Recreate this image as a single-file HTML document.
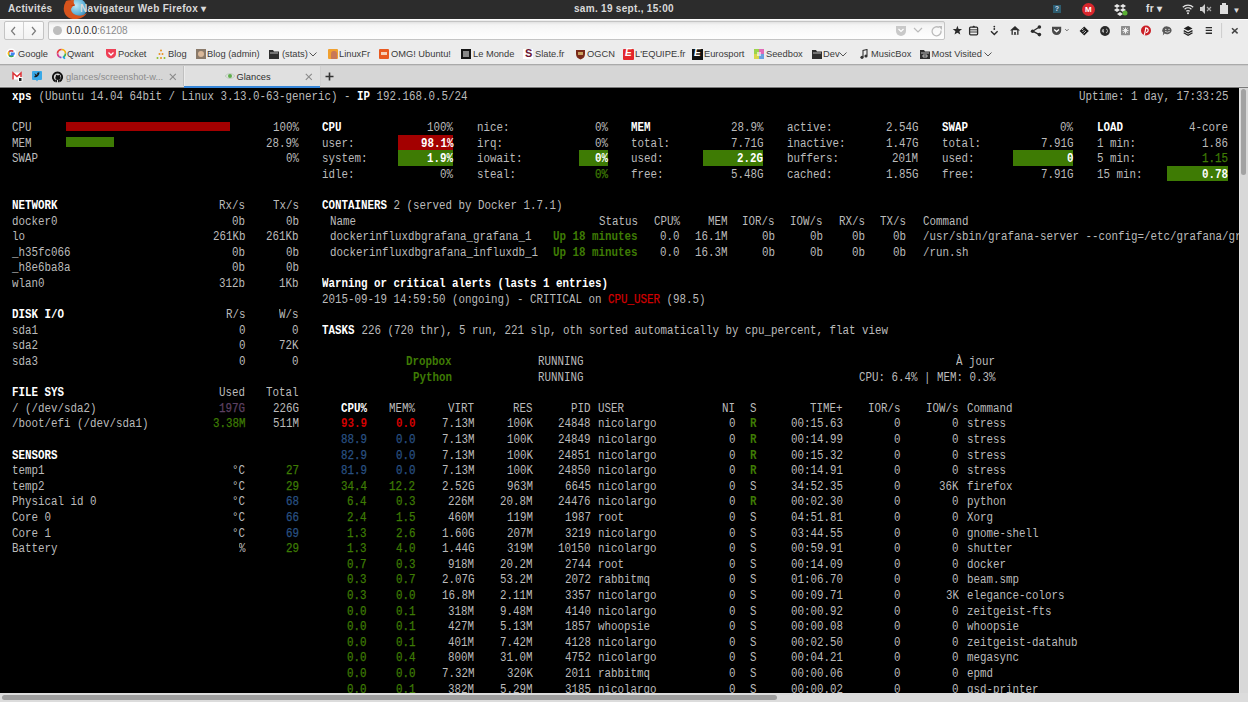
<!DOCTYPE html>
<html><head><meta charset="utf-8"><style>
html,body{margin:0;padding:0;}
body{width:1248px;height:702px;overflow:hidden;position:relative;background:#000;font-family:"Liberation Sans",sans-serif;}
#term{position:absolute;left:0;top:88px;width:1240px;height:605px;background:#000;overflow:hidden;}
#term .inner{position:absolute;left:0;top:-88px;width:1240px;height:702px;}
.t{position:absolute;white-space:pre;font-family:"Liberation Mono",monospace;font-size:12.0px;line-height:15.6px;height:15.6px;color:#bbbbbb;transform:scaleX(0.90263);transform-origin:0 0;}
.t.b{font-weight:bold;color:#fff;}
.t.w{color:#fff;}
.t.c{font-weight:bold;}
.t.col{-webkit-text-stroke:0.25px currentColor;}
.bg{position:absolute;}
#topbar{position:absolute;left:0;top:0;width:1248px;height:19px;background:#2c2c2c;color:#dadada;font-weight:bold;font-size:10px;letter-spacing:0.3px;overflow:hidden;}
#topbar span{position:absolute;top:3px;white-space:pre;}
#toolbox{position:absolute;left:0;top:19px;width:1248px;height:46px;background:#ececec;border-top:1px solid #ffffff;border-bottom:1px solid #aaaaaa;box-sizing:border-box;}
#navbar{position:absolute;left:0;top:19px;width:1248px;height:24px;}
#bkbar{position:absolute;left:0;top:43px;width:1248px;height:21px;}
#bkbar span{position:absolute;top:6px;font-size:9.3px;color:#3a3a3a;white-space:pre;}
#tabbar{position:absolute;left:0;top:65px;width:1248px;height:23px;background:#d6d6d6;border-top:1px solid #c8c8c8;border-bottom:1px solid #7a7a7a;box-sizing:border-box;}
.ico{position:absolute;}
#vscroll{position:absolute;left:1239px;top:88px;width:9px;height:605px;background:#d8d8d8;border-left:1px solid #e4e4e4;box-sizing:border-box;}
#vscroll .thumb{position:absolute;left:1px;top:1px;width:5px;height:86px;background:#a2a2a2;border-radius:2.5px;}
#hscroll{position:absolute;left:0;top:693px;width:1240px;height:9px;background:#dcdcdc;}
#hscroll .thumb{position:absolute;left:2px;top:2px;width:775px;height:5px;background:#9e9e9e;border-radius:3px;}
#corner{position:absolute;left:1240px;top:693px;width:8px;height:9px;background:#dcdcdc;}

</style></head><body>

<div id="topbar">
<span style="left:8px">Activités</span>
<svg class="ico" style="left:62px;top:0" width="28" height="19"><defs><radialGradient id="gl" cx="0.45" cy="0.35" r="0.7"><stop offset="0" stop-color="#bfe6f5"/><stop offset="0.6" stop-color="#5fb3da"/><stop offset="1" stop-color="#2f6f9a"/></radialGradient></defs><circle cx="15" cy="8.5" r="10" fill="url(#gl)"/><path d="M4 1 Q0 8 3 14 Q7 20 15 19 Q22 18 25 13 Q20 17 14 15 Q9 13 9 9 Q10 6 13 5 Q11 3 12 0 Q6 0 4 1z" fill="#d6531c"/><path d="M9 6 q1-2 4-1 l-1 1z" fill="#c23a10"/></svg>
<span style="left:80px">Navigateur Web Firefox ▾</span>
<span style="left:574px">sam. 19 sept., 15:00</span>
<div class="ico" style="left:1053px;top:5px;width:8px;height:8px;background:#2e5c6e;color:#cde;font-size:7px;line-height:8px;text-align:center">?</div>
<div class="ico" style="left:1082px;top:3px;width:13px;height:13px;border-radius:50%;background:#d9272e;color:#fff;font-size:8px;line-height:13px;text-align:center">M</div>
<svg class="ico" style="left:1114px;top:3px" width="14" height="13"><path d="M3 1 l3 2 -3 2 -3 -2z M9 1 l3 2 -3 2 -3 -2z M3 5 l3 2 -3 2 -3 -2z M9 5 l3 2 -3 2 -3 -2z M6 9 l3 2 -3 2 -3 -2z" fill="#e8e8e8"/><circle cx="11" cy="10" r="2.5" fill="#5bb135"/></svg>
<span style="left:1146px;top:3px;color:#e0e0e0">fr ▾</span>
<svg class="ico" style="left:1182px;top:3px" width="12" height="12"><g fill="none" stroke="#e5e5e5" stroke-width="1.2"><path d="M.8 4.2A7.5 7.5 0 0 1 11.2 4.2"/><path d="M2.6 6.3A5 5 0 0 1 9.4 6.3"/><path d="M4.3 8.3A2.5 2.5 0 0 1 7.7 8.3"/></g><circle cx="6" cy="10.3" r="1" fill="#e5e5e5"/></svg>
<svg class="ico" style="left:1200px;top:4px" width="12" height="10"><path d="M0 3h2l3-3v10l-3-3h-2z" fill="#cfcfcf"/><path d="M7 3l4 4M11 3l-4 4" stroke="#aaa" stroke-width="1.2"/></svg>
<div class="ico" style="left:1220px;top:5px;width:8px;height:9px;background:#dedede"></div><div class="ico" style="left:1222px;top:3px;width:4px;height:2px;background:#dedede"></div>
<span style="left:1232.5px;top:5.5px;font-size:8px">▼</span>
</div>
<div id="toolbox"></div>
<div id="navbar">
<div style="position:absolute;left:4px;top:2px;width:40px;height:19px;border:1px solid #c4c4c4;border-radius:2px;background:linear-gradient(#fbfbfb,#f2f2f2);box-sizing:border-box"></div>
<div style="position:absolute;left:23px;top:3px;width:1px;height:17px;background:#d0d0d0"></div>
<svg class="ico" style="left:10px;top:7px" width="30" height="10"><path d="M5 1 L1.5 5 L5 9" stroke="#7a7a7a" stroke-width="1.2" fill="none"/><path d="M22 1 L25.5 5 L22 9" stroke="#7a7a7a" stroke-width="1.2" fill="none"/></svg>
<div style="position:absolute;left:48px;top:2px;width:897px;height:19px;border:1px solid #c4c4c4;border-radius:2px;background:linear-gradient(#e2e2e2,#f4f4f4 3px,#f9f9f9 50%,#fefefe);box-sizing:border-box"></div>
<div class="ico" style="left:53px;top:7px;width:9px;height:9px;border-radius:50%;background:#bdbdbd"></div>
<span style="position:absolute;left:66.5px;top:5.5px;font-size:10px;color:#2a2a2a;white-space:pre">0.0.0.0<span style="color:#8a8a8a">:61208</span></span>
<svg class="ico" style="left:895px;top:6px" width="50" height="12"><path d="M1 1h10v5a5 5 0 0 1 -10 0z" fill="#c9c9c9"/><path d="M3.5 4l2.5 2.5l2.5 -2.5" stroke="#fff" stroke-width="1.2" fill="none"/><path d="M19 3l4 4 4-4" stroke="#bbb" stroke-width="1.2" fill="none"/><path d="M44 2.5a4.5 4.5 0 1 0 2 3" stroke="#bbb" stroke-width="1.3" fill="none"/><path d="M43 1h4v4z" fill="#bbb"/></svg>
<svg class="ico" style="left:950px;top:4px" width="298" height="16">
<path d="M7.40 2.70 L8.63 5.90 L12.06 6.09 L9.40 8.25 L10.28 11.56 L7.40 9.70 L4.52 11.56 L5.40 8.25 L2.74 6.09 L6.17 5.90z" fill="#2b2b2b"/>
<rect x="19.6" y="4.2" width="8" height="7.6" rx="1" fill="none" stroke="#2b2b2b" stroke-width="1.3"/><path d="M20 6.8h7.4M20 9h7.4" stroke="#2b2b2b" stroke-width=".9"/><path d="M22 4.2l1.8-1.6 1.8 1.6z" fill="#2b2b2b"/>
<circle cx="44.3" cy="3.6" r=".9" fill="#2b2b2b"/><circle cx="44.3" cy="6" r=".9" fill="#2b2b2b"/><path d="M41 8.2l3.3 3.3 3.3-3.3" stroke="#2b2b2b" stroke-width="1.4" fill="none"/>
<path d="M60 7.6l5-4.6 5 4.6z" fill="#2b2b2b"/><path d="M61.5 7v4.8h7v-4.8" fill="#2b2b2b"/><rect x="62.8" y="7.2" width="4.4" height="4.6" fill="#ececec"/><rect x="64.2" y="9" width="1.6" height="2.8" fill="#2b2b2b"/>
<circle cx="82.6" cy="8.2" r="1.8" fill="#2b2b2b"/><circle cx="89.4" cy="4" r="1.8" fill="#2b2b2b"/><circle cx="89.4" cy="11.6" r="1.8" fill="#2b2b2b"/><path d="M82.6 8.2L89.4 4M82.6 8.2L89.4 11.6" stroke="#2b2b2b" stroke-width="1.3"/>
<path d="M102 3.8h9.2v3.6a4.6 4.6 0 0 1-9.2 0z" fill="#4a4a4a"/><path d="M104.2 6.4l2.4 2.2 2.4-2.2" stroke="#fff" stroke-width="1.3" fill="none"/><path d="M115.3 6.2l1.6 1.6 1.6-1.6" stroke="#555" stroke-width=".9" fill="none"/>
<path d="M129.6 8l4.6-4.6 4.6 4.6-4.6 4.6z" fill="#1e1e1e"/><path d="M132.5 9l2-2M133.5 10.5l2.5-2.5M132 7l1.5-1.5" stroke="#eee" stroke-width=".8"/>
<circle cx="155" cy="8" r="4.9" fill="#2a2a2a"/><path d="M153 6.3l-1 2h2M153.3 6v3.8M156 6a1.5 1.9 0 1 1 0 3.8" stroke="#ddd" stroke-width=".7" fill="none"/>
<rect x="171" y="3" width="9" height="9.2" rx=".6" fill="#8c8c8c"/><path d="M175.5 4.5v6.2M172.5 7.6h6M173.4 5.4l4.2 4.4M177.6 5.4l-4.2 4.4" stroke="#f4f4f4" stroke-width="1"/>
<circle cx="196" cy="7.5" r="5" fill="#cb2027"/><path d="M195.2 5a2.3 2.3 0 1 1 .8 4.5M195.8 5.4l-1.4 6.4" stroke="#fff" stroke-width="1.2" fill="none"/>
<path d="M217.4 3.4a4.6 3.9 0 1 1-2.8 7.2l-1.8 1.8.5-2.6a4.6 3.9 0 0 1 4.1-6.4z" fill="#585858"/><circle cx="215.8" cy="6.4" r=".7" fill="#ddd"/><circle cx="219" cy="6.4" r=".7" fill="#ddd"/><path d="M215 8.3q2.4 1.8 4.8 0" stroke="#ddd" stroke-width=".8" fill="none"/>
<path d="M238.1 3l4.4 2.4-4.4 2.4-4.4-2.4z" fill="#1e1e1e"/><path d="M233.7 7.6l4.4 2.4 4.4-2.4M233.7 9.8l4.4 2.4 4.4-2.4" stroke="#1e1e1e" stroke-width="1.3" fill="none"/>
<path d="M255.7 4.6h6.3M255.7 7.4h6.3M255.7 10.2h6.3" stroke="#2b2b2b" stroke-width="1.4"/>
<rect x="271.2" y="-1" width=".9" height="16" fill="#c8c8c8"/>
<path d="M282 5.2l5.6 5.2M287.6 5.2l-5.6 5.2" stroke="#444" stroke-width="1.5"/>
</svg>
</div>
<div id="bkbar">
<svg class="ico" style="left:6px;top:5px" width="11" height="11"><circle cx="5.3" cy="5.5" r="5" fill="#fff"/><path d="M8.8 5.3H5.5V6.5h2.2A2.6 2.6 0 1 1 7.2 3.5" stroke="#4285f4" stroke-width="1.5" fill="none"/><path d="M7.2 3.5A2.7 2.7 0 0 0 3 3.8" stroke="#ea4335" stroke-width="1.5" fill="none"/><path d="M3 3.8A2.7 2.7 0 0 0 3.1 7.3" stroke="#fbbc05" stroke-width="1.5" fill="none"/><path d="M3.1 7.3A2.7 2.7 0 0 0 7.4 7.7" stroke="#34a853" stroke-width="1.5" fill="none"/></svg>
<span style="left:18px">Google</span>
<svg class="ico" style="left:56px;top:5px" width="12" height="12"><g fill="none" stroke-width="1.7"><path d="M5.5 1.5A4 4 0 0 1 9.5 5.5" stroke="#f6b40e"/><path d="M9.5 5.5A4 4 0 0 1 7.5 9" stroke="#3fb44d"/><path d="M1.5 5.5A4 4 0 0 1 5.5 1.5" stroke="#e8403f"/><path d="M3.5 9A4 4 0 0 1 1.5 5.5" stroke="#d93a8a"/><path d="M5.5 9.5A4 4 0 0 1 3.5 9" stroke="#8a4ac8"/></g><path d="M7 8.5l1.8 2.3" stroke="#1aa0e0" stroke-width="1.8"/></svg>
<span style="left:67px">Qwant</span>
<svg class="ico" style="left:106px;top:6px" width="11" height="10"><path d="M0 0h10v4.5a5 5 0 0 1-10 0z" fill="#ee4056"/><path d="M2.5 3.5l2.5 2.5 2.5-2.5" stroke="#fff" stroke-width="1.3" fill="none"/></svg>
<span style="left:118px">Pocket</span>
<svg class="ico" style="left:156px;top:6px" width="11" height="11"><circle cx="5" cy="1.5" r="1" fill="#e8901d"/><circle cx="3.5" cy="5" r="1" fill="#e8901d"/><circle cx="6.5" cy="5" r="1" fill="#e8901d"/><circle cx="1.5" cy="9" r="1" fill="#8cbf26"/><circle cx="5" cy="9" r="1" fill="#e8901d"/><circle cx="8.5" cy="9" r="1" fill="#8cbf26"/></svg>
<span style="left:168px">Blog</span>
<div class="ico" style="left:196px;top:48px;width:10px;height:10px;background:#8a7a6a;margin-top:-42px"></div>
<div class="ico" style="left:198px;top:8px;width:6px;height:6px;border-radius:50%;background:#d9b89a"></div>
<span style="left:207px">Blog (admin)</span>
<svg class="ico" style="left:269px;top:7px" width="10" height="9"><path d="M0 0h4l1 1.5h5v7.5h-10z" fill="#2f2f2f"/><path d="M1 3h8" stroke="#ddd" stroke-width=".8"/></svg>
<span style="left:282px">(stats)</span>
<svg class="ico" style="left:309px;top:9px" width="8" height="5"><path d="M.5 .5l3.5 3.5 3.5-3.5" stroke="#555" stroke-width="1" fill="none"/></svg>
<div class="ico" style="left:328px;top:6px;width:10px;height:10px;background:#f0a030;border-radius:1px"></div><div class="ico" style="left:331px;top:8px;width:6px;height:8px;background:#c87858;border-radius:40% 40% 0 0"></div>
<span style="left:339px">LinuxFr</span>
<div class="ico" style="left:379px;top:6px;width:10px;height:10px;background:#e85a20;border-radius:1px"></div><div class="ico" style="left:381px;top:9px;width:6px;height:3px;background:#f6d0b8"></div>
<span style="left:391px">OMG! Ubuntu!</span>
<div class="ico" style="left:461px;top:6px;width:10px;height:10px;background:#151515"></div><div class="ico" style="left:463px;top:8px;width:6px;height:6px;background:#888"></div>
<span style="left:473px">Le Monde</span>
<div class="ico" style="left:523px;top:6px;width:10px;height:10px;background:#fff"></div><span style="left:525px;top:4px;font-weight:bold;color:#6b1535;font-size:11px">S</span>
<span style="left:535px">Slate.fr</span>
<svg class="ico" style="left:575px;top:6px" width="11" height="11"><path d="M1 1h9v4q0 4-4.5 5.5q-4.5-1.5-4.5-5.5z" fill="#7a2a1a"/><path d="M3 3h5v3h-5z" fill="#c9a060"/></svg>
<span style="left:587px">OGCN</span>
<div class="ico" style="left:623px;top:6px;width:11px;height:11px;background:#e3262b;border-radius:1px"></div><span style="left:625px;top:4px;font-weight:bold;font-style:italic;color:#fff;font-size:10px">E</span>
<span style="left:635px">L'EQUIPE.fr</span>
<div class="ico" style="left:692px;top:6px;width:11px;height:11px;background:#111"></div><span style="left:694px;top:4px;font-weight:bold;font-style:italic;color:#fff;font-size:10px">E</span>
<span style="left:704px">Eurosport</span>
<svg class="ico" style="left:754px;top:6px" width="11" height="11"><rect x="0" y="0" width="5" height="5" fill="#9bd34a"/><rect x="5" y="0" width="5" height="5" fill="#e06ab8"/><rect x="0" y="5" width="5" height="5" fill="#d8d84a"/><rect x="5" y="5" width="5" height="5" fill="#6aa0e0"/><rect x="3" y="3" width="4" height="4" fill="#fff" opacity=".6"/></svg>
<span style="left:766px">Seedbox</span>
<svg class="ico" style="left:812px;top:7px" width="10" height="9"><path d="M0 0h4l1 1.5h5v7.5h-10z" fill="#2f2f2f"/><path d="M1 3h8" stroke="#ddd" stroke-width=".8"/></svg>
<span style="left:823px">Dev</span>
<svg class="ico" style="left:839px;top:9px" width="8" height="5"><path d="M.5 .5l3.5 3.5 3.5-3.5" stroke="#555" stroke-width="1" fill="none"/></svg>
<svg class="ico" style="left:860px;top:6px" width="8" height="10"><path d="M3 8V1.5l4-1v6" stroke="#333" stroke-width="1.1" fill="none"/><circle cx="2" cy="8.3" r="1.6" fill="#333"/><circle cx="6" cy="7" r="1.6" fill="#333"/></svg>
<span style="left:871px">MusicBox</span>
<svg class="ico" style="left:920px;top:7px" width="10" height="9"><path d="M0 0h4l1 1.5h5v7.5h-10z" fill="#2f2f2f"/><path d="M1 3h8M3 5h4v2h-4z" stroke="#ddd" stroke-width=".8" fill="none"/></svg>
<span style="left:931.5px">Most Visited</span>
<svg class="ico" style="left:984px;top:9px" width="8" height="5"><path d="M.5 .5l3.5 3.5 3.5-3.5" stroke="#555" stroke-width="1" fill="none"/></svg>
</div>
<div id="tabbar">
<div style="position:absolute;left:184px;top:0;width:136px;height:21px;background:#e0e0e0;border-left:1px solid #ececec;box-sizing:border-box"></div>
<div style="position:absolute;left:183px;top:0;width:1px;height:21px;background:#c0c0c0"></div>
<div style="position:absolute;left:320px;top:0;width:1px;height:21px;background:#cfcfcf"></div>
<div style="position:absolute;left:0;top:20px;width:1248px;height:1px;background:#dcdcdc"></div><div style="position:absolute;left:184px;top:20px;width:136px;height:3px;background:#3786d8"></div>
<svg class="ico" style="left:12px;top:5px" width="12" height="12"><path d="M0.5 1.5h9v7h-9z" fill="#fff"/><path d="M1 8.5V2l4 3.5 4-3.5v6.5" stroke="#db3236" stroke-width="1.5" fill="none"/><rect x="6" y="6" width="4.5" height="4.5" fill="#fff"/><rect x="7" y="7" width="2.5" height="3" fill="#222"/></svg>
<svg class="ico" style="left:32px;top:5px" width="11" height="12"><rect x="0" y="0" width="10" height="9" rx="1" fill="#39a9e8"/><path d="M4 9l1 1.5 1-1.5z" fill="#39a9e8"/><path d="M2 6q2 1 4-1q1-1 1.5-3l1-.5-1 .2q-1-1-2 0q-1 1 0 2q-1.5 0-3-1.5q0 1.5 1 2z" fill="#1a1a1a"/></svg>
<svg class="ico" style="left:52px;top:5px" width="12" height="12"><path d="M3.6 10.3A4.6 4.6 0 1 1 7.4 10.3" stroke="#111" stroke-width="1.9" fill="none"/><path d="M3.4 7.5q-.3-1.6.6-2.4l-.2-1.6 1.3.8h1.8l1.3-.8-.2 1.6q.9.8.6 2.4q-.4 1.3-2.6 1.4q-2.2-.1-2.6-1.4z" fill="#111"/><path d="M4.3 8.6v2.6M6.7 8.6v2.6" stroke="#111" stroke-width="1.3"/></svg>
<span style="position:absolute;left:66px;top:5.5px;font-size:9.3px;color:#8c8c8c;white-space:pre">glances/screenshot-w...</span>
<svg class="ico" style="left:169px;top:7px" width="8" height="8"><path d="M.8 .8l6 6M6.8 .8l-6 6" stroke="#8a8a8a" stroke-width="1.1"/></svg>
<svg class="ico" style="left:224px;top:6px" width="12" height="8"><path d="M1 4q5-5 10 0q-5 5-10 0z" fill="none" stroke="#b8c8b8" stroke-width=".8"/><circle cx="6" cy="4" r="2" fill="#5fae4b"/></svg>
<span style="position:absolute;left:236.5px;top:5.5px;font-size:9.3px;color:#2f2f2f;white-space:pre">Glances</span>
<svg class="ico" style="left:305px;top:7px" width="8" height="8"><path d="M.8 .8l6 6M6.8 .8l-6 6" stroke="#8a8a8a" stroke-width="1.1"/></svg>
<svg class="ico" style="left:325px;top:6px" width="9" height="9"><path d="M4.5 .5v8M.5 4.5h8" stroke="#333" stroke-width="1.6"/></svg>
</div>

<div id="term"><div class="inner">
<div class="t b" style="left:12.00px;top:89.80px">xps</div>
<div class="t " style="left:31.50px;top:89.80px"> (Ubuntu 14.04 64bit / Linux 3.13.0-63-generic) - </div>
<div class="t b" style="left:356.50px;top:89.80px">IP</div>
<div class="t " style="left:369.50px;top:89.80px"> 192.168.0.5/24</div>
<div class="t " style="left:1079.00px;top:89.80px">Uptime: 1 day, 17:33:25</div>
<div class="t " style="left:12.00px;top:121.00px">CPU</div>
<div class="t " style="left:12.00px;top:136.60px">MEM</div>
<div class="t " style="left:12.00px;top:152.20px">SWAP</div>
<div class="bg" style="left:66px;top:121.50px;width:164px;height:9.5px;background:#a30000"></div>
<div class="bg" style="left:66px;top:137.10px;width:48px;height:9.5px;background:#3e7b04"></div>
<div class="t " style="left:272.50px;top:121.00px">100%</div>
<div class="t " style="left:266.00px;top:136.60px">28.9%</div>
<div class="t " style="left:285.50px;top:152.20px">0%</div>
<div class="t b" style="left:321.50px;top:121.00px">CPU</div>
<div class="t " style="left:427.00px;top:121.00px">100%</div>
<div class="t " style="left:321.50px;top:136.60px">user:</div>
<div class="bg" style="left:398px;top:134.60px;width:55px;height:15.60px;background:#a30000"></div>
<div class="t b w" style="left:420.50px;top:136.60px">98.1%</div>
<div class="t " style="left:321.50px;top:152.20px">system:</div>
<div class="bg" style="left:398px;top:150.20px;width:55px;height:15.60px;background:#3e7b04"></div>
<div class="t b w" style="left:427.00px;top:152.20px">1.9%</div>
<div class="t " style="left:321.50px;top:167.80px">idle:</div>
<div class="t " style="left:440.00px;top:167.80px">0%</div>
<div class="t " style="left:476.50px;top:121.00px">nice:</div>
<div class="t " style="left:595.00px;top:121.00px">0%</div>
<div class="t " style="left:476.50px;top:136.60px">irq:</div>
<div class="t " style="left:595.00px;top:136.60px">0%</div>
<div class="t " style="left:476.50px;top:152.20px">iowait:</div>
<div class="bg" style="left:579px;top:150.20px;width:29px;height:15.60px;background:#3e7b04"></div>
<div class="t b w" style="left:595.00px;top:152.20px">0%</div>
<div class="t " style="left:476.50px;top:167.80px">steal:</div>
<div class="t  col" style="left:595.00px;top:167.80px;color:#3e7b04">0%</div>
<div class="t b" style="left:631.00px;top:121.00px">MEM</div>
<div class="t " style="left:730.50px;top:121.00px">28.9%</div>
<div class="t " style="left:631.00px;top:136.60px">total:</div>
<div class="t " style="left:730.50px;top:136.60px">7.71G</div>
<div class="t " style="left:631.00px;top:152.20px">used:</div>
<div class="bg" style="left:703px;top:150.20px;width:60px;height:15.60px;background:#3e7b04"></div>
<div class="t b w" style="left:737.00px;top:152.20px">2.2G</div>
<div class="t " style="left:631.00px;top:167.80px">free:</div>
<div class="t " style="left:730.50px;top:167.80px">5.48G</div>
<div class="t " style="left:786.80px;top:121.00px">active:</div>
<div class="t " style="left:885.50px;top:121.00px">2.54G</div>
<div class="t " style="left:786.80px;top:136.60px">inactive:</div>
<div class="t " style="left:885.50px;top:136.60px">1.47G</div>
<div class="t " style="left:786.80px;top:152.20px">buffers:</div>
<div class="t " style="left:892.00px;top:152.20px">201M</div>
<div class="t " style="left:786.80px;top:167.80px">cached:</div>
<div class="t " style="left:885.50px;top:167.80px">1.85G</div>
<div class="t b" style="left:941.70px;top:121.00px">SWAP</div>
<div class="t " style="left:1060.00px;top:121.00px">0%</div>
<div class="t " style="left:941.70px;top:136.60px">total:</div>
<div class="t " style="left:1040.50px;top:136.60px">7.91G</div>
<div class="t " style="left:941.70px;top:152.20px">used:</div>
<div class="bg" style="left:1013px;top:150.20px;width:60px;height:15.60px;background:#3e7b04"></div>
<div class="t b w" style="left:1066.50px;top:152.20px">0</div>
<div class="t " style="left:941.70px;top:167.80px">free:</div>
<div class="t " style="left:1040.50px;top:167.80px">7.91G</div>
<div class="t b" style="left:1097.00px;top:121.00px">LOAD</div>
<div class="t " style="left:1189.00px;top:121.00px">4-core</div>
<div class="t " style="left:1097.00px;top:136.60px">1 min:</div>
<div class="t " style="left:1202.00px;top:136.60px">1.86</div>
<div class="t " style="left:1097.00px;top:152.20px">5 min:</div>
<div class="t  col" style="left:1202.00px;top:152.20px;color:#3e7b04">1.15</div>
<div class="t " style="left:1097.00px;top:167.80px">15 min:</div>
<div class="bg" style="left:1167px;top:165.80px;width:61px;height:15.60px;background:#3e7b04"></div>
<div class="t b w" style="left:1202.00px;top:167.80px">0.78</div>
<div class="t b" style="left:12.00px;top:199.00px">NETWORK</div>
<div class="t " style="left:219.20px;top:199.00px">Rx/s</div>
<div class="t " style="left:272.50px;top:199.00px">Tx/s</div>
<div class="t " style="left:12.00px;top:214.60px">docker0</div>
<div class="t " style="left:232.20px;top:214.60px">0b</div>
<div class="t " style="left:285.50px;top:214.60px">0b</div>
<div class="t " style="left:12.00px;top:230.20px">lo</div>
<div class="t " style="left:212.70px;top:230.20px">261Kb</div>
<div class="t " style="left:266.00px;top:230.20px">261Kb</div>
<div class="t " style="left:12.00px;top:245.80px">_h35fc066</div>
<div class="t " style="left:232.20px;top:245.80px">0b</div>
<div class="t " style="left:285.50px;top:245.80px">0b</div>
<div class="t " style="left:12.00px;top:261.40px">_h8e6ba8a</div>
<div class="t " style="left:232.20px;top:261.40px">0b</div>
<div class="t " style="left:285.50px;top:261.40px">0b</div>
<div class="t " style="left:12.00px;top:277.00px">wlan0</div>
<div class="t " style="left:219.20px;top:277.00px">312b</div>
<div class="t " style="left:279.00px;top:277.00px">1Kb</div>
<div class="t b" style="left:12.00px;top:308.20px">DISK I/O</div>
<div class="t " style="left:225.70px;top:308.20px">R/s</div>
<div class="t " style="left:279.00px;top:308.20px">W/s</div>
<div class="t " style="left:12.00px;top:323.80px">sda1</div>
<div class="t " style="left:238.70px;top:323.80px">0</div>
<div class="t " style="left:292.00px;top:323.80px">0</div>
<div class="t " style="left:12.00px;top:339.40px">sda2</div>
<div class="t " style="left:238.70px;top:339.40px">0</div>
<div class="t " style="left:279.00px;top:339.40px">72K</div>
<div class="t " style="left:12.00px;top:355.00px">sda3</div>
<div class="t " style="left:238.70px;top:355.00px">0</div>
<div class="t " style="left:292.00px;top:355.00px">0</div>
<div class="t b" style="left:12.00px;top:386.20px">FILE SYS</div>
<div class="t " style="left:219.20px;top:386.20px">Used</div>
<div class="t " style="left:266.00px;top:386.20px">Total</div>
<div class="t " style="left:12.00px;top:401.80px">/ (/dev/sda2)</div>
<div class="t  col" style="left:219.20px;top:401.80px;color:#5d4062">197G</div>
<div class="t " style="left:272.50px;top:401.80px">226G</div>
<div class="t " style="left:12.00px;top:417.40px">/boot/efi (/dev/sda1)</div>
<div class="t  col" style="left:212.70px;top:417.40px;color:#3e7b04">3.38M</div>
<div class="t " style="left:272.50px;top:417.40px">511M</div>
<div class="t b" style="left:12.00px;top:448.60px">SENSORS</div>
<div class="t " style="left:12.00px;top:464.20px">temp1</div>
<div class="t " style="left:232.20px;top:464.20px">°C</div>
<div class="t  col" style="left:285.50px;top:464.20px;color:#3e7b04">27</div>
<div class="t " style="left:12.00px;top:479.80px">temp2</div>
<div class="t " style="left:232.20px;top:479.80px">°C</div>
<div class="t  col" style="left:285.50px;top:479.80px;color:#3e7b04">29</div>
<div class="t " style="left:12.00px;top:495.40px">Physical id 0</div>
<div class="t " style="left:232.20px;top:495.40px">°C</div>
<div class="t  col" style="left:285.50px;top:495.40px;color:#295183">68</div>
<div class="t " style="left:12.00px;top:511.00px">Core 0</div>
<div class="t " style="left:232.20px;top:511.00px">°C</div>
<div class="t  col" style="left:285.50px;top:511.00px;color:#295183">66</div>
<div class="t " style="left:12.00px;top:526.60px">Core 1</div>
<div class="t " style="left:232.20px;top:526.60px">°C</div>
<div class="t  col" style="left:285.50px;top:526.60px;color:#295183">69</div>
<div class="t " style="left:12.00px;top:542.20px">Battery</div>
<div class="t " style="left:238.70px;top:542.20px">%</div>
<div class="t  col" style="left:285.50px;top:542.20px;color:#3e7b04">29</div>
<div class="t b" style="left:322.00px;top:199.00px">CONTAINERS</div>
<div class="t " style="left:387.00px;top:199.00px"> 2 (served by Docker 1.7.1)</div>
<div class="t " style="left:329.50px;top:214.60px">Name</div>
<div class="t " style="left:598.50px;top:214.60px">Status</div>
<div class="t " style="left:653.50px;top:214.60px">CPU%</div>
<div class="t " style="left:708.00px;top:214.60px">MEM</div>
<div class="t " style="left:742.20px;top:214.60px">IOR/s</div>
<div class="t " style="left:790.20px;top:214.60px">IOW/s</div>
<div class="t " style="left:838.50px;top:214.60px">RX/s</div>
<div class="t " style="left:879.70px;top:214.60px">TX/s</div>
<div class="t " style="left:922.50px;top:214.60px">Command</div>
<div class="t " style="left:329.50px;top:230.20px">dockerinfluxdbgrafana_grafana_1</div>
<div class="t c" style="left:553.00px;top:230.20px;color:#3e7b04">Up 18 minutes</div>
<div class="t " style="left:660.00px;top:230.20px">0.0</div>
<div class="t " style="left:695.00px;top:230.20px">16.1M</div>
<div class="t " style="left:761.70px;top:230.20px">0b</div>
<div class="t " style="left:809.70px;top:230.20px">0b</div>
<div class="t " style="left:851.50px;top:230.20px">0b</div>
<div class="t " style="left:892.70px;top:230.20px">0b</div>
<div class="t " style="left:922.50px;top:230.20px">/usr/sbin/grafana-server --config=/etc/grafana/grafana.ini</div>
<div class="t " style="left:329.50px;top:245.80px">dockerinfluxdbgrafana_influxdb_1</div>
<div class="t c" style="left:553.00px;top:245.80px;color:#3e7b04">Up 18 minutes</div>
<div class="t " style="left:660.00px;top:245.80px">0.0</div>
<div class="t " style="left:695.00px;top:245.80px">16.3M</div>
<div class="t " style="left:761.70px;top:245.80px">0b</div>
<div class="t " style="left:809.70px;top:245.80px">0b</div>
<div class="t " style="left:851.50px;top:245.80px">0b</div>
<div class="t " style="left:892.70px;top:245.80px">0b</div>
<div class="t " style="left:922.50px;top:245.80px">/run.sh</div>
<div class="t b" style="left:322.00px;top:277.00px">Warning or critical alerts (lasts 1 entries)</div>
<div class="t " style="left:322.00px;top:292.60px">2015-09-19 14:59:50 (ongoing) - CRITICAL on </div>
<div class="t  col" style="left:608.00px;top:292.60px;color:#d20000">CPU_USER</div>
<div class="t " style="left:660.00px;top:292.60px"> (98.5)</div>
<div class="t b" style="left:322.00px;top:323.80px">TASKS</div>
<div class="t " style="left:354.50px;top:323.80px"> 226 (720 thr), 5 run, 221 slp, oth sorted automatically by cpu_percent, flat view</div>
<div class="t b" style="left:406.00px;top:355.00px;color:#3e7b04">Dropbox</div>
<div class="t " style="left:537.50px;top:355.00px">RUNNING</div>
<div class="t " style="left:956.00px;top:355.00px">À jour</div>
<div class="t b" style="left:412.50px;top:370.60px;color:#3e7b04">Python</div>
<div class="t " style="left:537.50px;top:370.60px">RUNNING</div>
<div class="t " style="left:858.50px;top:370.60px">CPU: 6.4% | MEM: 0.3%</div>
<div class="t b" style="left:340.50px;top:401.80px">CPU%</div>
<div class="t " style="left:389.00px;top:401.80px">MEM%</div>
<div class="t " style="left:448.00px;top:401.80px">VIRT</div>
<div class="t " style="left:513.00px;top:401.80px">RES</div>
<div class="t " style="left:571.00px;top:401.80px">PID</div>
<div class="t " style="left:598.00px;top:401.80px">USER</div>
<div class="t " style="left:722.00px;top:401.80px">NI</div>
<div class="t " style="left:749.50px;top:401.80px">S</div>
<div class="t " style="left:810.00px;top:401.80px">TIME+</div>
<div class="t " style="left:867.50px;top:401.80px">IOR/s</div>
<div class="t " style="left:926.00px;top:401.80px">IOW/s</div>
<div class="t " style="left:967.00px;top:401.80px">Command</div>
<div class="t c" style="left:340.50px;top:417.40px;color:#d20000">93.9</div>
<div class="t c" style="left:395.50px;top:417.40px;color:#d20000">0.0</div>
<div class="t " style="left:441.50px;top:417.40px">7.13M</div>
<div class="t " style="left:506.50px;top:417.40px">100K</div>
<div class="t " style="left:558.00px;top:417.40px">24848</div>
<div class="t " style="left:598.00px;top:417.40px">nicolargo</div>
<div class="t " style="left:728.50px;top:417.40px">0</div>
<div class="t b" style="left:749.50px;top:417.40px;color:#3e7b04">R</div>
<div class="t " style="left:790.50px;top:417.40px">00:15.63</div>
<div class="t " style="left:893.50px;top:417.40px">0</div>
<div class="t " style="left:952.00px;top:417.40px">0</div>
<div class="t " style="left:967.00px;top:417.40px">stress</div>
<div class="t  col" style="left:340.50px;top:433.00px;color:#295183">88.9</div>
<div class="t  col" style="left:395.50px;top:433.00px;color:#295183">0.0</div>
<div class="t " style="left:441.50px;top:433.00px">7.13M</div>
<div class="t " style="left:506.50px;top:433.00px">100K</div>
<div class="t " style="left:558.00px;top:433.00px">24849</div>
<div class="t " style="left:598.00px;top:433.00px">nicolargo</div>
<div class="t " style="left:728.50px;top:433.00px">0</div>
<div class="t b" style="left:749.50px;top:433.00px;color:#3e7b04">R</div>
<div class="t " style="left:790.50px;top:433.00px">00:14.99</div>
<div class="t " style="left:893.50px;top:433.00px">0</div>
<div class="t " style="left:952.00px;top:433.00px">0</div>
<div class="t " style="left:967.00px;top:433.00px">stress</div>
<div class="t  col" style="left:340.50px;top:448.60px;color:#295183">82.9</div>
<div class="t  col" style="left:395.50px;top:448.60px;color:#295183">0.0</div>
<div class="t " style="left:441.50px;top:448.60px">7.13M</div>
<div class="t " style="left:506.50px;top:448.60px">100K</div>
<div class="t " style="left:558.00px;top:448.60px">24851</div>
<div class="t " style="left:598.00px;top:448.60px">nicolargo</div>
<div class="t " style="left:728.50px;top:448.60px">0</div>
<div class="t b" style="left:749.50px;top:448.60px;color:#3e7b04">R</div>
<div class="t " style="left:790.50px;top:448.60px">00:15.32</div>
<div class="t " style="left:893.50px;top:448.60px">0</div>
<div class="t " style="left:952.00px;top:448.60px">0</div>
<div class="t " style="left:967.00px;top:448.60px">stress</div>
<div class="t  col" style="left:340.50px;top:464.20px;color:#295183">81.9</div>
<div class="t  col" style="left:395.50px;top:464.20px;color:#295183">0.0</div>
<div class="t " style="left:441.50px;top:464.20px">7.13M</div>
<div class="t " style="left:506.50px;top:464.20px">100K</div>
<div class="t " style="left:558.00px;top:464.20px">24850</div>
<div class="t " style="left:598.00px;top:464.20px">nicolargo</div>
<div class="t " style="left:728.50px;top:464.20px">0</div>
<div class="t b" style="left:749.50px;top:464.20px;color:#3e7b04">R</div>
<div class="t " style="left:790.50px;top:464.20px">00:14.91</div>
<div class="t " style="left:893.50px;top:464.20px">0</div>
<div class="t " style="left:952.00px;top:464.20px">0</div>
<div class="t " style="left:967.00px;top:464.20px">stress</div>
<div class="t  col" style="left:340.50px;top:479.80px;color:#3e7b04">34.4</div>
<div class="t  col" style="left:389.00px;top:479.80px;color:#3e7b04">12.2</div>
<div class="t " style="left:441.50px;top:479.80px">2.52G</div>
<div class="t " style="left:506.50px;top:479.80px">963M</div>
<div class="t " style="left:564.50px;top:479.80px">6645</div>
<div class="t " style="left:598.00px;top:479.80px">nicolargo</div>
<div class="t " style="left:728.50px;top:479.80px">0</div>
<div class="t " style="left:749.50px;top:479.80px">S</div>
<div class="t " style="left:790.50px;top:479.80px">34:52.35</div>
<div class="t " style="left:893.50px;top:479.80px">0</div>
<div class="t " style="left:939.00px;top:479.80px">36K</div>
<div class="t " style="left:967.00px;top:479.80px">firefox</div>
<div class="t  col" style="left:347.00px;top:495.40px;color:#3e7b04">6.4</div>
<div class="t  col" style="left:395.50px;top:495.40px;color:#3e7b04">0.3</div>
<div class="t " style="left:448.00px;top:495.40px">226M</div>
<div class="t " style="left:500.00px;top:495.40px">20.8M</div>
<div class="t " style="left:558.00px;top:495.40px">24476</div>
<div class="t " style="left:598.00px;top:495.40px">nicolargo</div>
<div class="t " style="left:728.50px;top:495.40px">0</div>
<div class="t b" style="left:749.50px;top:495.40px;color:#3e7b04">R</div>
<div class="t " style="left:790.50px;top:495.40px">00:02.30</div>
<div class="t " style="left:893.50px;top:495.40px">0</div>
<div class="t " style="left:952.00px;top:495.40px">0</div>
<div class="t " style="left:967.00px;top:495.40px">python</div>
<div class="t  col" style="left:347.00px;top:511.00px;color:#3e7b04">2.4</div>
<div class="t  col" style="left:395.50px;top:511.00px;color:#3e7b04">1.5</div>
<div class="t " style="left:448.00px;top:511.00px">460M</div>
<div class="t " style="left:506.50px;top:511.00px">119M</div>
<div class="t " style="left:564.50px;top:511.00px">1987</div>
<div class="t " style="left:598.00px;top:511.00px">root</div>
<div class="t " style="left:728.50px;top:511.00px">0</div>
<div class="t " style="left:749.50px;top:511.00px">S</div>
<div class="t " style="left:790.50px;top:511.00px">04:51.81</div>
<div class="t " style="left:893.50px;top:511.00px">0</div>
<div class="t " style="left:952.00px;top:511.00px">0</div>
<div class="t " style="left:967.00px;top:511.00px">Xorg</div>
<div class="t  col" style="left:347.00px;top:526.60px;color:#3e7b04">1.3</div>
<div class="t  col" style="left:395.50px;top:526.60px;color:#3e7b04">2.6</div>
<div class="t " style="left:441.50px;top:526.60px">1.60G</div>
<div class="t " style="left:506.50px;top:526.60px">207M</div>
<div class="t " style="left:564.50px;top:526.60px">3219</div>
<div class="t " style="left:598.00px;top:526.60px">nicolargo</div>
<div class="t " style="left:728.50px;top:526.60px">0</div>
<div class="t " style="left:749.50px;top:526.60px">S</div>
<div class="t " style="left:790.50px;top:526.60px">03:44.55</div>
<div class="t " style="left:893.50px;top:526.60px">0</div>
<div class="t " style="left:952.00px;top:526.60px">0</div>
<div class="t " style="left:967.00px;top:526.60px">gnome-shell</div>
<div class="t  col" style="left:347.00px;top:542.20px;color:#3e7b04">1.3</div>
<div class="t  col" style="left:395.50px;top:542.20px;color:#3e7b04">4.0</div>
<div class="t " style="left:441.50px;top:542.20px">1.44G</div>
<div class="t " style="left:506.50px;top:542.20px">319M</div>
<div class="t " style="left:558.00px;top:542.20px">10150</div>
<div class="t " style="left:598.00px;top:542.20px">nicolargo</div>
<div class="t " style="left:728.50px;top:542.20px">0</div>
<div class="t " style="left:749.50px;top:542.20px">S</div>
<div class="t " style="left:790.50px;top:542.20px">00:59.91</div>
<div class="t " style="left:893.50px;top:542.20px">0</div>
<div class="t " style="left:952.00px;top:542.20px">0</div>
<div class="t " style="left:967.00px;top:542.20px">shutter</div>
<div class="t  col" style="left:347.00px;top:557.80px;color:#3e7b04">0.7</div>
<div class="t  col" style="left:395.50px;top:557.80px;color:#3e7b04">0.3</div>
<div class="t " style="left:448.00px;top:557.80px">918M</div>
<div class="t " style="left:500.00px;top:557.80px">20.2M</div>
<div class="t " style="left:564.50px;top:557.80px">2744</div>
<div class="t " style="left:598.00px;top:557.80px">root</div>
<div class="t " style="left:728.50px;top:557.80px">0</div>
<div class="t " style="left:749.50px;top:557.80px">S</div>
<div class="t " style="left:790.50px;top:557.80px">00:14.09</div>
<div class="t " style="left:893.50px;top:557.80px">0</div>
<div class="t " style="left:952.00px;top:557.80px">0</div>
<div class="t " style="left:967.00px;top:557.80px">docker</div>
<div class="t  col" style="left:347.00px;top:573.40px;color:#3e7b04">0.3</div>
<div class="t  col" style="left:395.50px;top:573.40px;color:#3e7b04">0.7</div>
<div class="t " style="left:441.50px;top:573.40px">2.07G</div>
<div class="t " style="left:500.00px;top:573.40px">53.2M</div>
<div class="t " style="left:564.50px;top:573.40px">2072</div>
<div class="t " style="left:598.00px;top:573.40px">rabbitmq</div>
<div class="t " style="left:728.50px;top:573.40px">0</div>
<div class="t " style="left:749.50px;top:573.40px">S</div>
<div class="t " style="left:790.50px;top:573.40px">01:06.70</div>
<div class="t " style="left:893.50px;top:573.40px">0</div>
<div class="t " style="left:952.00px;top:573.40px">0</div>
<div class="t " style="left:967.00px;top:573.40px">beam.smp</div>
<div class="t  col" style="left:347.00px;top:589.00px;color:#3e7b04">0.3</div>
<div class="t  col" style="left:395.50px;top:589.00px;color:#3e7b04">0.0</div>
<div class="t " style="left:441.50px;top:589.00px">16.8M</div>
<div class="t " style="left:500.00px;top:589.00px">2.11M</div>
<div class="t " style="left:564.50px;top:589.00px">3357</div>
<div class="t " style="left:598.00px;top:589.00px">nicolargo</div>
<div class="t " style="left:728.50px;top:589.00px">0</div>
<div class="t " style="left:749.50px;top:589.00px">S</div>
<div class="t " style="left:790.50px;top:589.00px">00:09.71</div>
<div class="t " style="left:893.50px;top:589.00px">0</div>
<div class="t " style="left:945.50px;top:589.00px">3K</div>
<div class="t " style="left:967.00px;top:589.00px">elegance-colors</div>
<div class="t  col" style="left:347.00px;top:604.60px;color:#3e7b04">0.0</div>
<div class="t  col" style="left:395.50px;top:604.60px;color:#3e7b04">0.1</div>
<div class="t " style="left:448.00px;top:604.60px">318M</div>
<div class="t " style="left:500.00px;top:604.60px">9.48M</div>
<div class="t " style="left:564.50px;top:604.60px">4140</div>
<div class="t " style="left:598.00px;top:604.60px">nicolargo</div>
<div class="t " style="left:728.50px;top:604.60px">0</div>
<div class="t " style="left:749.50px;top:604.60px">S</div>
<div class="t " style="left:790.50px;top:604.60px">00:00.92</div>
<div class="t " style="left:893.50px;top:604.60px">0</div>
<div class="t " style="left:952.00px;top:604.60px">0</div>
<div class="t " style="left:967.00px;top:604.60px">zeitgeist-fts</div>
<div class="t  col" style="left:347.00px;top:620.20px;color:#3e7b04">0.0</div>
<div class="t  col" style="left:395.50px;top:620.20px;color:#3e7b04">0.1</div>
<div class="t " style="left:448.00px;top:620.20px">427M</div>
<div class="t " style="left:500.00px;top:620.20px">5.13M</div>
<div class="t " style="left:564.50px;top:620.20px">1857</div>
<div class="t " style="left:598.00px;top:620.20px">whoopsie</div>
<div class="t " style="left:728.50px;top:620.20px">0</div>
<div class="t " style="left:749.50px;top:620.20px">S</div>
<div class="t " style="left:790.50px;top:620.20px">00:00.08</div>
<div class="t " style="left:893.50px;top:620.20px">0</div>
<div class="t " style="left:952.00px;top:620.20px">0</div>
<div class="t " style="left:967.00px;top:620.20px">whoopsie</div>
<div class="t  col" style="left:347.00px;top:635.80px;color:#3e7b04">0.0</div>
<div class="t  col" style="left:395.50px;top:635.80px;color:#3e7b04">0.1</div>
<div class="t " style="left:448.00px;top:635.80px">401M</div>
<div class="t " style="left:500.00px;top:635.80px">7.42M</div>
<div class="t " style="left:564.50px;top:635.80px">4128</div>
<div class="t " style="left:598.00px;top:635.80px">nicolargo</div>
<div class="t " style="left:728.50px;top:635.80px">0</div>
<div class="t " style="left:749.50px;top:635.80px">S</div>
<div class="t " style="left:790.50px;top:635.80px">00:02.50</div>
<div class="t " style="left:893.50px;top:635.80px">0</div>
<div class="t " style="left:952.00px;top:635.80px">0</div>
<div class="t " style="left:967.00px;top:635.80px">zeitgeist-datahub</div>
<div class="t  col" style="left:347.00px;top:651.40px;color:#3e7b04">0.0</div>
<div class="t  col" style="left:395.50px;top:651.40px;color:#3e7b04">0.4</div>
<div class="t " style="left:448.00px;top:651.40px">800M</div>
<div class="t " style="left:500.00px;top:651.40px">31.0M</div>
<div class="t " style="left:564.50px;top:651.40px">4752</div>
<div class="t " style="left:598.00px;top:651.40px">nicolargo</div>
<div class="t " style="left:728.50px;top:651.40px">0</div>
<div class="t " style="left:749.50px;top:651.40px">S</div>
<div class="t " style="left:790.50px;top:651.40px">00:04.21</div>
<div class="t " style="left:893.50px;top:651.40px">0</div>
<div class="t " style="left:952.00px;top:651.40px">0</div>
<div class="t " style="left:967.00px;top:651.40px">megasync</div>
<div class="t  col" style="left:347.00px;top:667.00px;color:#3e7b04">0.0</div>
<div class="t  col" style="left:395.50px;top:667.00px;color:#3e7b04">0.0</div>
<div class="t " style="left:441.50px;top:667.00px">7.32M</div>
<div class="t " style="left:506.50px;top:667.00px">320K</div>
<div class="t " style="left:564.50px;top:667.00px">2011</div>
<div class="t " style="left:598.00px;top:667.00px">rabbitmq</div>
<div class="t " style="left:728.50px;top:667.00px">0</div>
<div class="t " style="left:749.50px;top:667.00px">S</div>
<div class="t " style="left:790.50px;top:667.00px">00:00.06</div>
<div class="t " style="left:893.50px;top:667.00px">0</div>
<div class="t " style="left:952.00px;top:667.00px">0</div>
<div class="t " style="left:967.00px;top:667.00px">epmd</div>
<div class="t  col" style="left:347.00px;top:682.60px;color:#3e7b04">0.0</div>
<div class="t  col" style="left:395.50px;top:682.60px;color:#3e7b04">0.1</div>
<div class="t " style="left:448.00px;top:682.60px">382M</div>
<div class="t " style="left:500.00px;top:682.60px">5.29M</div>
<div class="t " style="left:564.50px;top:682.60px">3185</div>
<div class="t " style="left:598.00px;top:682.60px">nicolargo</div>
<div class="t " style="left:728.50px;top:682.60px">0</div>
<div class="t " style="left:749.50px;top:682.60px">S</div>
<div class="t " style="left:790.50px;top:682.60px">00:00.02</div>
<div class="t " style="left:893.50px;top:682.60px">0</div>
<div class="t " style="left:952.00px;top:682.60px">0</div>
<div class="t " style="left:967.00px;top:682.60px">gsd-printer</div>
</div></div>
<div id="vscroll"><div class="thumb"></div></div>
<div id="hscroll"><div class="thumb"></div></div>
<div id="corner"></div>
</body></html>
